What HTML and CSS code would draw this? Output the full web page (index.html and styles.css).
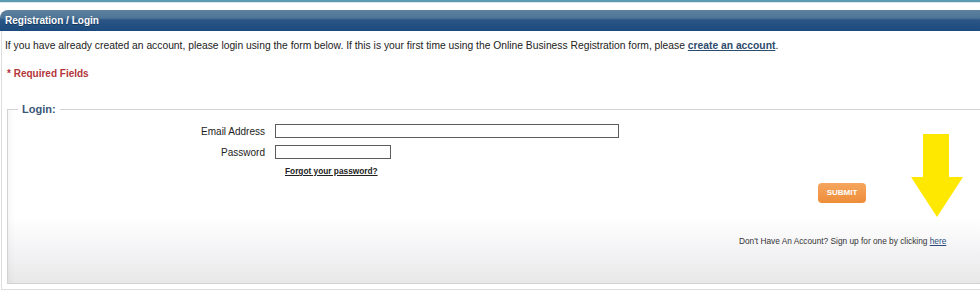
FILE: index.html
```html
<!DOCTYPE html>
<html>
<head>
<meta charset="utf-8">
<link rel="stylesheet" href="styles.css">
</head>
<body>
<div class="page">
  <div class="topbar"></div>
  <div class="header">Registration / Login</div>
  <div class="panel">
    <p class="intro">If you have already created an account, please login using the form below. If this is your first time using the Online Business Registration form, please <a href="#" class="link-strong">create an account</a>.</p>
    <p class="required">* Required Fields</p>
    <fieldset class="login">
      <legend>Login:</legend>
      <div class="form-grid">
        <label class="lbl" for="email">Email Address</label>
        <input id="email" class="field field-email" type="text">
        <label class="lbl" for="pw">Password</label>
        <input id="pw" class="field field-pw" type="password">
        <span></span>
        <a href="#" class="forgot">Forgot your password?</a>
      </div>
      <div class="actions"><button class="submit" type="button">SUBMIT</button></div>
      <div class="signup">Don't Have An Account? Sign up for one by clicking <a href="#" class="here">here</a></div>
    </fieldset>
  </div>
  <svg class="arrow" width="54" height="84" viewBox="0 0 54 84">
    <polygon points="13,0 39,0 39,43 53,43 27,83 1,43 13,43" fill="#ffe800"/>
  </svg>
</div>
</body>
</html>
```

FILE: styles.css
```css
html, body {
  margin: 0;
  padding: 0;
  overflow: hidden;
  background: #fff;
}
body {
  font-family: "Liberation Sans", Arial, sans-serif;
  color: #222;
}
.page {
  position: relative;
  width: 1000px;
}
.topbar {
  height: 2px;
  background: #5b9cb3;
  border-bottom: 1px solid #d6e6ec;
  margin-bottom: 7px;
}
.header {
  height: 21px;
  line-height: 21px;
  padding-left: 5px;
  border-top-left-radius: 8px;
  background: linear-gradient(to bottom, #5d819f 0%, #4e7596 38%, #2a5585 48%, #1d4a7d 100%);
  color: #fff;
  font-weight: bold;
  font-size: 10px;
  text-shadow: 0 1px 0 rgba(0,0,0,0.35);
}
.panel {
  margin-left: 1px;
  border-left: 1px solid #dcdcdc;
  border-bottom: 1px solid #dcdcdc;
  padding: 9px 0 5px 3px;
}
.intro {
  margin: 0;
  font-size: 10.3px;
  line-height: 12px;
  color: #222;
}
.link-strong {
  color: #2d4b6d;
  font-weight: bold;
  text-decoration: underline;
}
.required {
  margin: 16px 0 0 2px;
  font-size: 10px;
  line-height: 12px;
  font-weight: bold;
  color: #b3353a;
}
.login {
  margin: 23px 0 0 2px;
  padding: 0 0 37px 10px;
  border: 1px solid #d2d2d2;
  border-right: none;
  background: linear-gradient(to bottom, #ffffff 0%, #ffffff 62%, #f3f3f5 82%, #e8e8e8 100%);
  box-shadow: inset 6px 0 6px -5px rgba(0,0,0,0.06);
}
.login legend {
  padding: 0 4px;
  font-size: 11px;
  line-height: 13px;
  font-weight: bold;
  color: #3a5777;
}
.form-grid {
  display: grid;
  grid-template-columns: 247px auto;
  column-gap: 10px;
  row-gap: 7px;
  align-items: center;
  margin-top: 8px;
  justify-items: start;
}
.lbl {
  justify-self: end;
  font-size: 10px;
  color: #222;
}
.field {
  box-sizing: border-box;
  height: 14px;
  margin: 0;
  padding: 0;
  border: 1px solid #5c5c5c;
  background: #fff;
}
.field-email { width: 344px; }
.field-pw { width: 116px; }
.forgot {
  margin-left: 10px;
  font-size: 8.3px;
  font-weight: bold;
  color: #222;
  text-decoration: underline;
}
.actions {
  padding-left: 800px;
  margin-top: 5px;
}
.submit {
  width: 48px;
  height: 20px;
  border: none;
  border-radius: 4px;
  background: linear-gradient(to bottom, #f6a65f 0%, #ee8d39 100%);
  color: #fff;
  font-family: "Liberation Sans", Arial, sans-serif;
  font-weight: bold;
  font-size: 8px;
  padding: 0;
}
.signup {
  padding-left: 721px;
  margin-top: 33px;
  font-size: 8.3px;
  line-height: 10px;
  color: #333;
}
.here {
  color: #2a4a7a;
  text-decoration: underline;
}
.arrow {
  position: absolute;
  left: 910px;
  top: 134px;
}
```
